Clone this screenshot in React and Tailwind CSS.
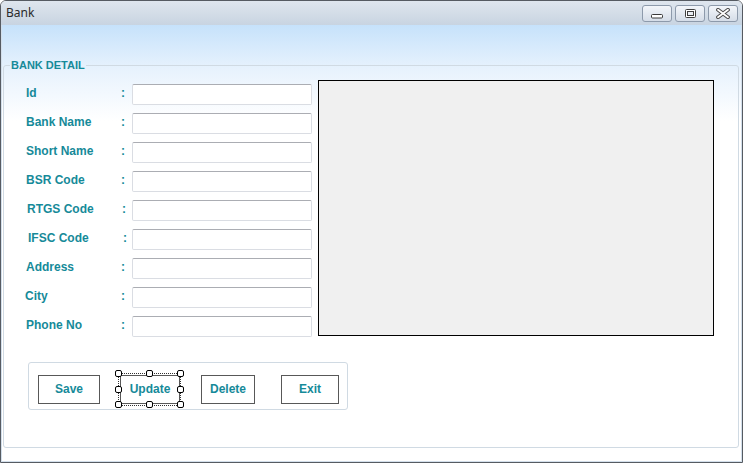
import React from 'react'

const fields = [
	{ label: 'Id', pad: 'pl-[22px]', colon: 'pl-0' },
	{ label: 'Bank Name', pad: 'pl-[22px]', colon: 'pl-0' },
	{ label: 'Short Name', pad: 'pl-[22px]', colon: 'pl-0' },
	{ label: 'BSR Code', pad: 'pl-[22px]', colon: 'pl-0' },
	{ label: 'RTGS Code', pad: 'pl-[23px]', colon: 'pl-[1px]' },
	{ label: 'IFSC Code', pad: 'pl-[24px]', colon: 'pl-[2px]' },
	{ label: 'Address', pad: 'pl-[22px]', colon: 'pl-0' },
	{ label: 'City', pad: 'pl-[21px]', colon: 'pl-0' },
	{ label: 'Phone No', pad: 'pl-[22px]', colon: 'pl-0' },
]

function CaptionButton({ children }) {
	return (
		<div className="flex h-[17px] w-[30px] items-center justify-center rounded-[3px] border border-[#8d9aab] bg-gradient-to-b from-[#f3f6fa] to-[#d5dde8]">
			{children}
		</div>
	)
}

function Handle({ pos }) {
	return <div className={`absolute h-[7px] w-[7px] rounded-[2px] border border-black bg-white ${pos}`} />
}

export default function App() {
	return (
		<div className="h-[469px] w-[749px] overflow-hidden bg-white font-['Liberation_Sans',Arial,sans-serif]">
			<div className="flex h-[463px] w-[743px] flex-col overflow-hidden rounded-t-[6px] border border-[#565b62]">
				{/* title bar */}
				<div className="flex h-[24px] shrink-0 bg-gradient-to-b from-[#dfe6ee] to-[#c8d4e1]">
					<span className="self-center pl-[5px] font-['Noto_Sans',sans-serif] text-[12px] text-[#2a2a2a]">Bank</span>
					<div className="mt-[4px] mr-[4px] ml-auto flex gap-[3px] self-start">
						<CaptionButton>
							<svg width="12" height="5" viewBox="0 0 12 5" className="mt-[6px]">
								<rect x="0.5" y="0.5" width="11" height="3.5" rx="1" fill="#fff" stroke="#3a3a3a" />
							</svg>
						</CaptionButton>
						<CaptionButton>
							<svg width="11" height="9" viewBox="0 0 11 9">
								<rect x="0.5" y="0.5" width="10" height="8" rx="1" fill="#fff" stroke="#3f3f3f" />
								<rect x="2.5" y="2.5" width="6" height="4" fill="#e8ecf2" stroke="#3f3f3f" />
							</svg>
						</CaptionButton>
						<CaptionButton>
							<svg width="14" height="11" viewBox="0 0 14 11">
								<path d="M2 1.8 L12 9.2 M12 1.8 L2 9.2" stroke="#4a4a4a" strokeWidth="3.8" strokeLinecap="round" />
								<path d="M2 1.8 L12 9.2 M12 1.8 L2 9.2" stroke="#fff" strokeWidth="1.8" strokeLinecap="round" />
							</svg>
						</CaptionButton>
					</div>
				</div>

				{/* client area */}
				<div className="flex-1 border-x border-b border-[#d3dfeb] bg-gradient-to-b from-[#c6e2fb] via-[#e7f2fd] via-[10%] to-white to-[22%]">
					<fieldset className="mt-[33px] ml-[1px] h-[390px] w-[736px] rounded-[3px] border border-[#d0dae3] p-0 pt-[8px]">
						<legend className="ml-[6px] px-[1px] text-[11px] leading-[14px] font-bold text-[#168a99]">BANK DETAIL</legend>

						<div className="flex">
							<div className="flex w-[308px] flex-col gap-[8px] pt-[4px]">
								{fields.map((f) => (
									<div key={f.label} className="flex h-[21px] items-center text-[12px] font-bold text-[#168a99]">
										<span className={`mb-[3px] w-[117px] ${f.pad}`}>{f.label}</span>
										<span className={`mb-[3px] w-[11px] ${f.colon}`}>:</span>
										<input className="h-[21px] w-[180px] rounded-[2px] border border-[#dadde3] border-t-[#abadb3] bg-white outline-none" />
									</div>
								))}
							</div>
							<div className="ml-[6px] h-[256px] w-[396px] border border-black bg-[#f0f0f0]" />
						</div>

						<div className="mt-[25px] ml-[24px] flex h-[48px] w-[320px] items-start rounded-[3px] border border-[#d0dae3] pt-[12px] pl-[9px] text-[12px] font-bold text-[#168a99]">
							<button className="h-[29px] w-[62px] border border-[#585858] bg-white pb-[2px]">Save</button>
							<div className="relative ml-[20px]">
								<button className="h-[29px] w-[60px] border border-[#585858] bg-white pb-[2px]">Update</button>
								<div className="absolute -top-[2px] -left-[2px] h-[33px] w-[63px] border border-dotted border-[#333]">
									<Handle pos="-top-[4px] -left-[4px]" />
									<Handle pos="-top-[4px] left-[27px]" />
									<Handle pos="-top-[4px] left-[58px]" />
									<Handle pos="top-[12px] -left-[4px]" />
									<Handle pos="top-[12px] left-[58px]" />
									<Handle pos="top-[27px] -left-[4px]" />
									<Handle pos="top-[27px] left-[27px]" />
									<Handle pos="top-[27px] left-[58px]" />
								</div>
							</div>
							<button className="ml-[21px] h-[29px] w-[54px] border border-[#585858] bg-white pb-[2px]">Delete</button>
							<button className="ml-[26px] h-[29px] w-[58px] border border-[#585858] bg-white pb-[2px]">Exit</button>
						</div>
					</fieldset>
				</div>
			</div>
		</div>
	)
}
